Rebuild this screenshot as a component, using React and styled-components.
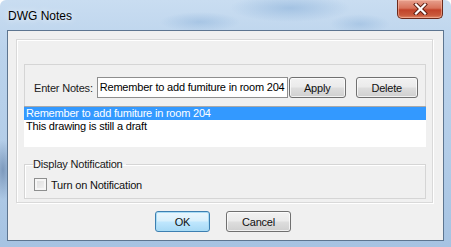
import React from "react";
import styled, { createGlobalStyle } from "styled-components";

const GlobalStyle = createGlobalStyle`
  html, body { margin: 0; padding: 0; background: #fff; }
  body { font-family: "Liberation Sans", Arial, sans-serif; }
  * { box-sizing: border-box; }
`;

const Window = styled.div`
  width: 451px;
  height: 247px;
  display: flex;
  flex-direction: column;
  overflow: hidden;
  border-radius: 6px 6px 0 0;
  background:
    radial-gradient(ellipse 60px 14px at 290px 8px, rgba(140,178,218,0.6), transparent),
    radial-gradient(ellipse 40px 10px at 200px 22px, rgba(140,178,218,0.5), transparent),
    radial-gradient(ellipse 30px 10px at 360px 24px, rgba(140,178,218,0.45), transparent),
    radial-gradient(ellipse 10px 30px at 3px 170px, rgba(90,120,160,0.6), transparent),
    linear-gradient(180deg, #c9ddf1 0%, #bbd3ec 20%, #b3cde8 60%, #a6c3e2 100%);
`;

const TitleBar = styled.div`
  height: 30px;
  display: flex;
  align-items: flex-start;
  justify-content: space-between;
  flex-shrink: 0;
`;

const Title = styled.div`
  padding: 9px 0 0 8px;
  font-size: 12px;
  color: #000;
  text-shadow: 0 0 6px rgba(255,255,255,0.9);
`;

const CloseButton = styled.div`
  width: 46px;
  height: 19px;
  margin-right: 8px;
  border: 1px solid #6b2a1c;
  border-top: none;
  border-radius: 0 0 5px 5px;
  background: linear-gradient(180deg, #e7a08e 0%, #d8735b 45%, #c2432a 55%, #c95a3c 85%, #e08a6a 100%);
  box-shadow: inset 0 0 0 1px rgba(255,200,180,0.5);
  display: flex;
  align-items: center;
  justify-content: center;
`;

const Client = styled.div`
  flex: 1;
  margin: 0 7px 6px 7px;
  border: 1px solid #5d7590;
  background: #f0f0f0;
  padding: 8px 10px 0 8px;
  display: flex;
  flex-direction: column;
  font-size: 11px;
  letter-spacing: -0.2px;
  color: #000;
`;

const Panel = styled.div`
  height: 164px;
  border: 1px solid #d9d9d9;
  box-shadow: inset 1px 1px 0 #fff, 1px 1px 0 #fff;
  padding: 24px 6px 1px 7px;
  display: flex;
  flex-direction: column;
`;

const NotesGroup = styled.div`
  border: 1px solid #d5d5d5;
  border-bottom: none;
  display: flex;
  flex-direction: column;
`;

const InputRow = styled.div`
  display: flex;
  align-items: center;
  padding: 12px 0 8px 9px;
`;

const Label = styled.span`
  margin-right: 4px;
  color: #1a1a1a;
`;

const TextInput = styled.div`
  width: 191px;
  height: 21px;
  border: 1px solid #8e8e8e;
  background: #fff;
  padding: 3px 0 0 2px;
  white-space: nowrap;
  overflow: hidden;
`;

const Button = styled.div`
  width: ${p => p.$w}px;
  height: 21px;
  margin-left: ${p => p.$gap || 0}px;
  border: 1px solid ${p => (p.$focus ? "#3c7fb1" : "#707070")};
  border-radius: 3px;
  background: ${p =>
    p.$focus
      ? "linear-gradient(180deg, #eaf6fd 0%, #d9f0fc 45%, #bee6fd 55%, #a7d9f5 100%)"
      : "linear-gradient(180deg, #f2f2f2 0%, #ebebeb 45%, #dddddd 55%, #cfcfcf 100%)"};
  box-shadow: inset 0 0 0 1px ${p => (p.$focus ? "#a9dcf5" : "rgba(255,255,255,0.7)")};
  display: flex;
  align-items: center;
  justify-content: center;
  color: #111;
`;

const List = styled.div`
  height: 41px;
  background: #fff;
  border-top: 1px solid #a9a9a9;
  margin: 0 -1px;
  display: flex;
  flex-direction: column;
`;

const ListItem = styled.div`
  height: 13px;
  line-height: 13px;
  padding-left: 2px;
  background: ${p => (p.$selected ? "#3399ff" : "transparent")};
  color: ${p => (p.$selected ? "#fff" : "#000")};
  white-space: nowrap;
`;

const Group = styled.fieldset`
  margin: 11px 0 0 0;
  padding: 2px 0 0 9px;
  height: 41px;
  border: 1px solid #d5d5d5;
  box-shadow: inset 1px 1px 0 #fff;
`;

const Legend = styled.legend`
  padding: 0 3px 0 0;
  margin-left: -1px;
  font-size: 11px;
  color: #1a1a1a;
`;

const CheckRow = styled.label`
  display: flex;
  align-items: center;
  gap: 4px;
  margin-top: 6px;
`;

const CheckBox = styled.span`
  width: 13px;
  height: 13px;
  border: 1px solid #8e8f8f;
  background: linear-gradient(135deg, #dcdcdc 0%, #f4f4f4 100%);
  box-shadow: inset 0 0 0 2px #f6f6f6;
`;

const ButtonRow = styled.div`
  display: flex;
  padding: 8px 0 0 139px;
`;

const BottomText = styled.span`
  color: #111;
`;

export default function App() {
  return (
    <>
      <GlobalStyle />
      <Window>
        <TitleBar>
          <Title>DWG Notes</Title>
          <CloseButton>
            <svg width="15" height="12" viewBox="0 0 15 12">
              <path d="M3 1.5 L12 10.5 M12 1.5 L3 10.5" stroke="#5b1a0e" strokeWidth="4" strokeLinecap="square" />
              <path d="M3 1.5 L12 10.5 M12 1.5 L3 10.5" stroke="#fff" strokeWidth="2.2" strokeLinecap="square" />
            </svg>
          </CloseButton>
        </TitleBar>
        <Client>
          <Panel>
            <NotesGroup>
              <InputRow>
                <Label>Enter Notes:</Label>
                <TextInput>Remember to add fumiture in room 204</TextInput>
                <Button $w={57} $gap={1}>Apply</Button>
                <Button $w={62} $gap={10}>Delete</Button>
              </InputRow>
              <List>
                <ListItem $selected>Remember to add fumiture in room 204</ListItem>
                <ListItem>This drawing is still a draft</ListItem>
              </List>
            </NotesGroup>
            <Group>
              <Legend>Display Notification</Legend>
              <CheckRow>
                <CheckBox />
                <BottomText>Turn on Notification</BottomText>
              </CheckRow>
            </Group>
          </Panel>
          <ButtonRow>
            <Button $w={55} $focus>OK</Button>
            <Button $w={65} $gap={16}>Cancel</Button>
          </ButtonRow>
        </Client>
      </Window>
    </>
  );
}
